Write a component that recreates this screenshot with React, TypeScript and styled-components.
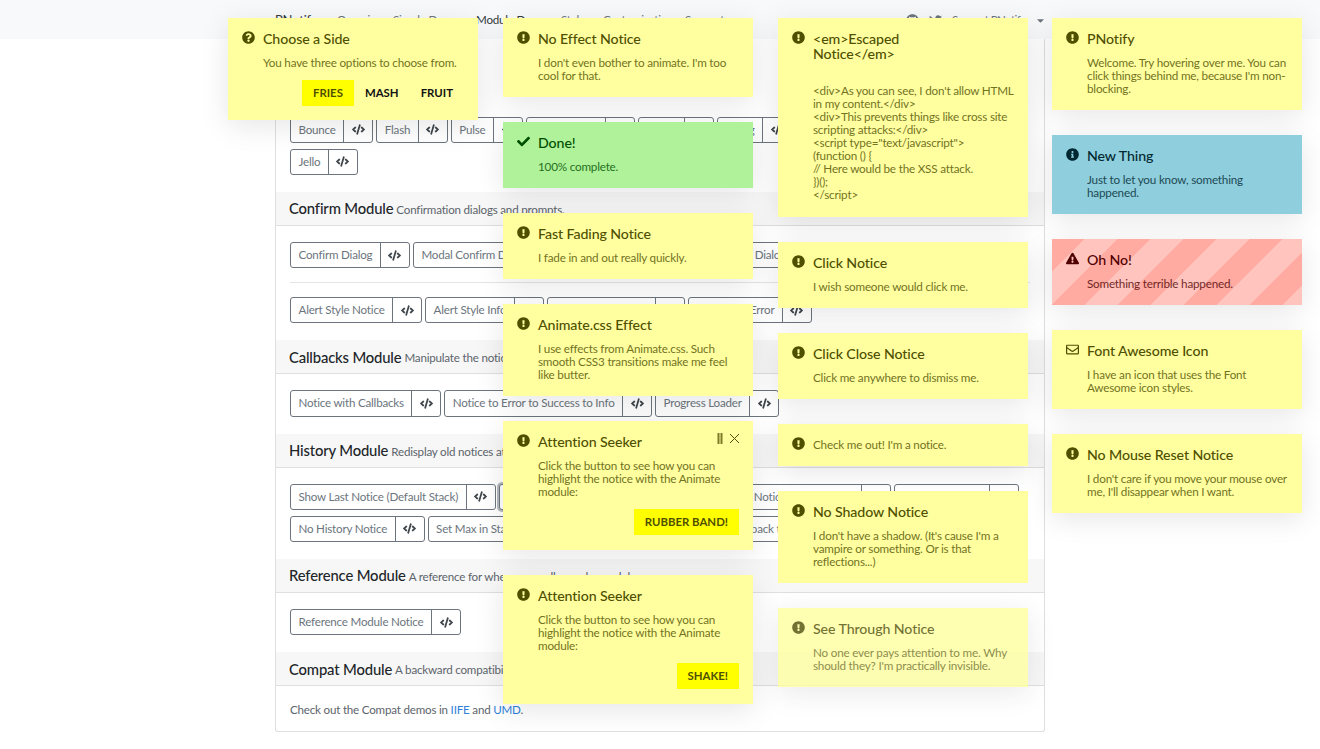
import React from 'react';
import styled, { createGlobalStyle } from 'styled-components';
import {
  FaExclamationCircle,
  FaQuestionCircle,
  FaCheck,
  FaInfoCircle,
  FaExclamationTriangle,
  FaRegEnvelope,
  FaCode,
  FaGithub,
  FaTwitter,
  FaCaretDown,
} from 'react-icons/fa';

const Global = createGlobalStyle`
  html, body { margin: 0; padding: 0; height: 749px; overflow: hidden; background: #fff; }
  body { font-family: "Lato", "Open Sans", sans-serif; font-size: 11.6px; letter-spacing: -.2px; color: #212529; }
  * { box-sizing: border-box; }
`;

const Page = styled.div`
  position: relative;
  width: 1320px;
  height: 749px;
  overflow: hidden;
`;

const Navbar = styled.nav`
  height: 39px;
  background: #f8f9fa;
  padding: 13px 0 0 275px;
  display: flex;
  align-items: flex-start;
  font-size: 11.6px;
  line-height: 14px;
  color: #6c757d;
`;

const Brand = styled.span`
  color: #343a40;
  font-size: 13px;
  width: 62px;
`;

const NavLink = styled.span<{ $w: number; $active?: boolean }>`
  width: ${(p) => p.$w}px;
  flex: none;
  white-space: nowrap;
  color: ${(p) => (p.$active ? '#343a40' : '#6c757d')};
`;

const NavRight = styled.div`
  margin-left: 171px;
  display: flex;
  align-items: center;
  gap: 10px;
  color: #6c757d;
  svg { flex: none; }
`;

const NavRightLabel = styled.span`
  width: 73px;
  flex: none;
  white-space: nowrap;
  letter-spacing: -.6px;
`;

const Card = styled.main`
  margin-left: 275px;
  width: 770px;
  height: 693px;
  border: 1px solid #dfdfdf;
  border-top: 0;
  border-radius: 0 0 3px 3px;
`;

const Header = styled.header`
  height: 34px;
  background: #f7f7f7;
  border-bottom: 1px solid #dfdfdf;
  padding: 0 13px;
  display: flex;
  align-items: center;
  gap: 3px;
  white-space: nowrap;
  overflow: hidden;
`;

const HeaderTitle = styled.span`
  font-size: 14.8px;
  letter-spacing: -.15px;
  font-weight: 500;
  color: #212529;
`;

const HeaderSub = styled.span`
  font-size: 11.6px;
  color: #5c646b;
  padding-top: 2px;
`;

const Body = styled.section<{ $top?: number }>`
  padding: ${(p) => p.$top ?? 16}px 14px 17px;
`;

const Row = styled.div`
  display: flex;
  flex-wrap: wrap;
  gap: 6px 3px;
`;

const Rule = styled.hr`
  border: 0;
  border-top: 1px solid #e4e4e4;
  margin: 14px 0;
`;

const Group = styled.div<{ $focus?: boolean }>`
  display: flex;
  height: 26.2px;
  border: 1px solid #6c757d;
  border-radius: 3px;
  color: #6c757d;
  background: #fff;
  box-shadow: ${(p) => (p.$focus ? '0 0 0 2px rgba(108,117,125,.5)' : 'none')};
`;

const GroupLabel = styled.span`
  padding: 0 7.5px;
  line-height: 24px;
  font-size: 11.6px;
  letter-spacing: -.2px;
  white-space: nowrap;
`;

const GroupCode = styled.span`
  width: 29px;
  border-left: 1px solid #6c757d;
  display: flex;
  align-items: center;
  justify-content: center;
  color: #3f464c;
  font-size: 13px;
`;

const Para = styled.p`
  margin: 1px 0 0;
  font-size: 11.6px;
  line-height: 14px;
  color: #5c646b;
`;

const Anchor = styled.a`
  color: #2f7fd8;
`;

const Stack = styled.div<{ $left: number }>`
  position: absolute;
  top: 18px;
  left: ${(p) => p.$left}px;
  width: 250px;
  display: flex;
  flex-direction: column;
  gap: 25px;
`;

type Kind = 'notice' | 'info' | 'success' | 'error';
const bg: Record<Kind, string> = { notice: '#ffffa0', info: '#8fcedd', success: '#aff29a', error: '#ffaba2' };
const fg: Record<Kind, string> = { notice: '#4f4f00', info: '#012831', success: '#004e00', error: '#4f0000' };

const Box = styled.div<{ $kind: Kind; $flat?: boolean; $ghost?: boolean; $tall?: boolean }>`
  position: relative;
  display: grid;
  grid-template-columns: 20px 1fr;
  padding: 12.5px 14px ${(p) => (p.$tall ? 16 : 15)}px 15px;
  background-color: ${(p) => bg[p.$kind]};
  background-image: ${(p) =>
    p.$kind === 'error'
      ? 'repeating-linear-gradient(135deg, transparent, transparent 23.3px, rgba(255,255,255,.3) 23.3px, rgba(255,255,255,.3) 46.6px)'
      : 'none'};
  color: ${(p) => fg[p.$kind]};
  box-shadow: ${(p) => (p.$flat ? 'none' : '0 6px 28px 0 rgba(0,0,0,.1)')};
  opacity: ${(p) => (p.$ghost ? 0.8 : 1)};
`;

const IconCell = styled.div`
  font-size: 13px;
  line-height: 0;
  margin-left: -1px;
`;

const Title = styled.div`
  font-size: 14.2px;
  letter-spacing: -.1px;
  line-height: 15px;
  font-weight: 500;
  margin-bottom: 10.5px;
`;

const Text = styled.div<{ $bare?: boolean }>`
  font-size: 11.7px;
  line-height: 13px;
  margin-top: ${(p) => (p.$bare ? 1.5 : 0)}px;
  white-space: pre-wrap;
  opacity: .8;
`;

const Actions = styled.div`
  grid-column: 1 / 3;
  margin-top: 11px;
  margin-bottom: -1px;
  display: flex;
  justify-content: flex-end;
`;

const ActionButton = styled.span<{ $primary?: boolean }>`
  height: 26px;
  padding: 0 11px;
  line-height: 26px;
  font-size: 11.4px;
  letter-spacing: 0;
  font-weight: 700;
  white-space: nowrap;
  background: ${(p) => (p.$primary ? '#ffff00' : 'transparent')};
  color: ${(p) => (p.$primary ? '#4f4f00' : '#111')};
`;

const Controls = styled.div`
  position: absolute;
  top: 12px;
  right: 13px;
  display: flex;
  align-items: center;
  gap: 6px;
  color: #4f4f00;
`;

const Button = ({ label, focus }: { label: string; focus?: boolean }) => (
  <Group $focus={focus}>
    <GroupLabel>{label}</GroupLabel>
    <GroupCode>
      <FaCode />
    </GroupCode>
  </Group>
);

const Section = ({ title, sub }: { title: string; sub: string }) => (
  <Header>
    <HeaderTitle>{title}</HeaderTitle>
    <HeaderSub>{sub}</HeaderSub>
  </Header>
);

type NoticeProps = {
  kind?: Kind;
  icon?: React.ReactNode;
  title?: React.ReactNode;
  text: string;
  flat?: boolean;
  ghost?: boolean;
  tall?: boolean;
  children?: React.ReactNode;
};

const Notice = ({ kind = 'notice', icon = <FaExclamationCircle />, title, text, flat, ghost, tall, children }: NoticeProps) => (
  <Box $kind={kind} $flat={flat} $ghost={ghost} $tall={tall}>
    <IconCell>{icon}</IconCell>
    <div>
      {title && <Title>{title}</Title>}
      <Text $bare={!title}>{text}</Text>
    </div>
    {children}
  </Box>
);

const PauseClose = () => (
  <Controls>
    <svg width="6" height="11" viewBox="0 0 6 11">
      <rect x="0.5" y="0" width="2" height="11" fill="currentColor" opacity=".75" />
      <rect x="3.5" y="0" width="2" height="11" fill="currentColor" opacity=".75" />
    </svg>
    <svg width="11" height="11" viewBox="0 0 11 11">
      <path d="M1 1l9 9M10 1l-9 9" stroke="currentColor" strokeWidth="1" fill="none" />
    </svg>
  </Controls>
);

const xss = `
<div>As you can see, I don't allow HTML in my content.</div>
<div>This prevents things like cross site scripting attacks:</div>
<script type="text/javascript">
(function () {
// Here would be the XSS attack.
})();
</script>`;

export default function App() {
  return (
    <Page>
      <Global />
      <Navbar>
        <Brand>PNotify</Brand>
        <NavLink $w={56}>Overview</NavLink>
        <NavLink $w={83}>Simple Demos</NavLink>
        <NavLink $w={85} $active>Module Demos</NavLink>
        <NavLink $w={42}>Styles</NavLink>
        <NavLink $w={82}>Customization</NavLink>
        <NavLink $w={50}>Support</NavLink>
        <NavRight>
          <FaGithub size={13} />
          <FaTwitter size={13} />
          <NavRightLabel>Support PNotify</NavRightLabel>
          <FaCaretDown size={11} />
        </NavRight>
      </Navbar>

      <Card>
        <Body $top={77.6}>
          <Row>
            {['Bounce', 'Flash', 'Pulse', 'Rubber Band', 'Shake', 'Swing', 'Tada', 'Wobble Head Effect', 'Jello'].map((b) => (
              <Button key={b} label={b} />
            ))}
          </Row>
        </Body>
        <Section title="Confirm Module" sub="Confirmation dialogs and prompts." />
        <Body>
          <Row>
            <Button label="Confirm Dialog" />
            <Button label="Modal Confirm Dialog" />
            <Button label="Prompt Dialog" />
            <Button label="Modal Text Dialog" />
          </Row>
          <Rule />
          <Row>
            <Button label="Alert Style Notice" />
            <Button label="Alert Style Info" />
            <Button label="Alert Style Success" />
            <Button label="Alert Style Error" />
          </Row>
        </Body>
        <Section title="Callbacks Module" sub="Manipulate the notice during its lifecycle." />
        <Body>
          <Row>
            <Button label="Notice with Callbacks" />
            <Button label="Notice to Error to Success to Info" />
            <Button label="Progress Loader" />
          </Row>
        </Body>
        <Section title="History Module" sub="Redisplay old notices at any time." />
        <Body>
          <Row>
            <Button label="Show Last Notice (Default Stack)" />
            <Button label="Show Last Notice (Bottom Left)" focus />
            <Button label="Show All Notices (Top Center)" />
            <Button label="Clear All History" />
            <Button label="No History Notice" />
            <Button label="Set Max in Stack (Maximum Open)" />
            <Button label="Use Notice with Fallback to Default" />
          </Row>
        </Body>
        <Section title="Reference Module" sub="A reference for when you really need a module." />
        <Body>
          <Row>
            <Button label="Reference Module Notice" />
          </Row>
        </Body>
        <Section title="Compat Module" sub="A backward compatibility layer." />
        <Body>
          <Para>
            Check out the Compat demos in <Anchor>IIFE</Anchor> and <Anchor>UMD</Anchor>.
          </Para>
        </Body>
      </Card>

      <Stack $left={228}>
        <Notice icon={<FaQuestionCircle />} title="Choose a Side" text="You have three options to choose from.">
          <Actions>
            <ActionButton $primary>FRIES</ActionButton>
            <ActionButton>MASH</ActionButton>
            <ActionButton>FRUIT</ActionButton>
          </Actions>
        </Notice>
      </Stack>

      <Stack $left={503}>
        <Notice title="No Effect Notice" text="I don't even bother to animate. I'm too cool for that." />
        <Notice kind="success" icon={<FaCheck />} title="Done!" text="100% complete." />
        <Notice title="Fast Fading Notice" text="I fade in and out really quickly." />
        <Notice title="Animate.css Effect" text="I use effects from Animate.css. Such smooth CSS3 transitions make me feel like butter." />
        <Notice tall title="Attention Seeker" text="Click the button to see how you can highlight the notice with the Animate module:">
          <PauseClose />
          <Actions>
            <ActionButton $primary>RUBBER BAND!</ActionButton>
          </Actions>
        </Notice>
        <Notice tall title="Attention Seeker" text="Click the button to see how you can highlight the notice with the Animate module:">
          <Actions>
            <ActionButton $primary>SHAKE!</ActionButton>
          </Actions>
        </Notice>
      </Stack>

      <Stack $left={778}>
        <Notice tall title={<>&lt;em&gt;Escaped<br />Notice&lt;/em&gt;</>} text={xss} />
        <Notice title="Click Notice" text="I wish someone would click me." />
        <Notice title="Click Close Notice" text="Click me anywhere to dismiss me." />
        <Notice text="Check me out! I'm a notice." />
        <Notice flat title="No Shadow Notice" text="I don't have a shadow. (It's cause I'm a vampire or something. Or is that reflections...)" />
        <Notice ghost title="See Through Notice" text="No one ever pays attention to me. Why should they? I'm practically invisible." />
      </Stack>

      <Stack $left={1052}>
        <Notice title="PNotify" text="Welcome. Try hovering over me. You can click things behind me, because I'm non-blocking." />
        <Notice kind="info" icon={<FaInfoCircle />} title="New Thing" text="Just to let you know, something happened." />
        <Notice kind="error" icon={<FaExclamationTriangle />} title="Oh No!" text="Something terrible happened." />
        <Notice icon={<FaRegEnvelope />} title="Font Awesome Icon" text="I have an icon that uses the Font Awesome icon styles." />
        <Notice title="No Mouse Reset Notice" text="I don't care if you move your mouse over me, I'll disappear when I want." />
      </Stack>
    </Page>
  );
}
